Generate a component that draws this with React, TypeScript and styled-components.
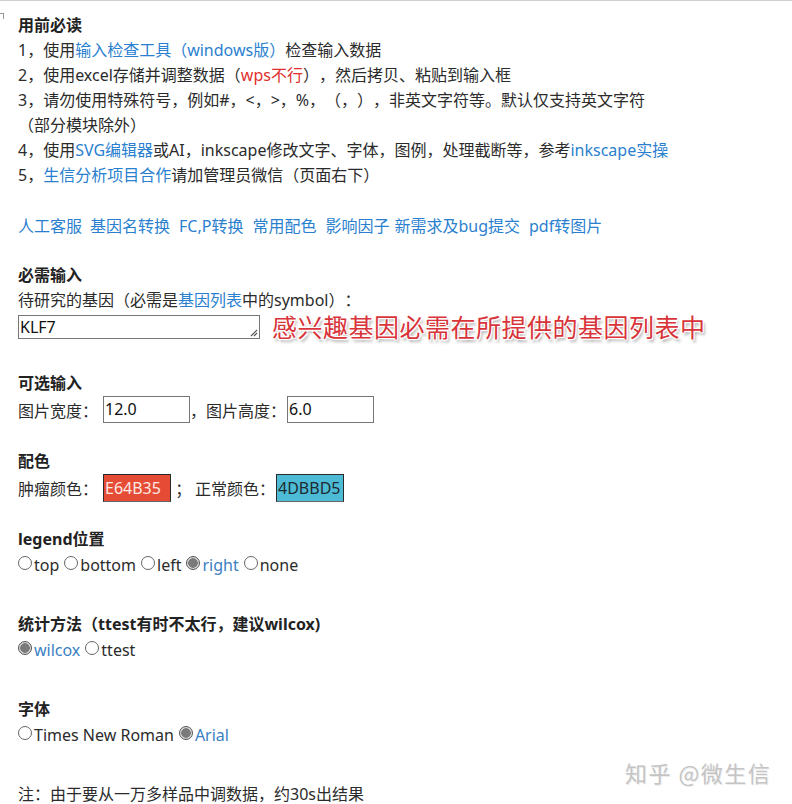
import React from "react";
import styled, { createGlobalStyle } from "styled-components";

const Global = createGlobalStyle`
  html, body { margin: 0; padding: 0; background: #fff; }
  body {
    font-family: "Noto Sans", "Noto Sans CJK SC", sans-serif;
    font-size: 16px;
    color: #2b2b2b;
    text-spacing-trim: space-all;
  }
`;

const Page = styled.div`
  position: relative;
  width: 792px;
  height: 804px;
  box-sizing: border-box;
  border-top: 1px solid #cfcfcf;
  padding: 12px 0 0 18px;
  overflow: hidden;
`;

const Corner = styled.div`
  position: absolute;
  left: 0;
  top: 12px;
  width: 3px;
  height: 5px;
  border-top: 1px solid #999;
  border-right: 1px solid #999;
`;

const Line = styled.div<{ $mt?: number }>`
  line-height: 25px;
  height: 25px;
  white-space: nowrap;
  margin-top: ${(p) => p.$mt ?? 0}px;
`;

const Title = styled(Line)`
  font-weight: 700;
  color: #222;
`;

const Link = styled.span`
  color: #2a7fcf;
`;

const Warn = styled.span`
  color: #e0302e;
`;

const LinkRow = styled.div<{ $mt?: number }>`
  display: flex;
  line-height: 25px;
  margin-top: ${(p) => p.$mt ?? 0}px;
  color: #2a7fcf;
  white-space: nowrap;
`;

const LinkItem = styled.span<{ $gap: number }>`
  margin-right: ${(p) => p.$gap}px;
`;

const FieldRow = styled.div<{ $mt?: number }>`
  display: flex;
  align-items: center;
  height: 27px;
  margin-top: ${(p) => p.$mt ?? 0}px;
  white-space: nowrap;
`;

const GeneArea = styled.div`
  position: relative;
  box-sizing: border-box;
  width: 242px;
  height: 24px;
  border: 1px solid #767676;
  padding: 0 0 0 1px;
  line-height: 22px;
  font-size: 16px;
  color: #111;
`;

const Grip = styled.svg`
  position: absolute;
  right: 1px;
  bottom: 1px;
`;

const Annotation = styled.span`
  margin-left: 12px;
  font-family: "Noto Sans CJK SC", sans-serif;
  font-size: 25px;
  font-weight: 400;
  line-height: 25px;
  color: #d8343a;
  letter-spacing: 0.5px;
  text-shadow: 1px 1px 0 #fff, -1px -1px 0 #fff, 1px -1px 0 #fff, -1px 1px 0 #fff,
    2px 3px 3px rgba(0, 0, 0, 0.35);
`;

const Label = styled.span<{ $w?: number }>`
  display: inline-block;
  width: ${(p) => (p.$w ? `${p.$w}px` : "auto")};
`;

const NumBox = styled.div`
  box-sizing: border-box;
  width: 87px;
  height: 27px;
  border: 1px solid #767676;
  padding-left: 1px;
  line-height: 25px;
  color: #111;
`;

const ColorBox = styled.div<{ $bg: string; $fg: string }>`
  box-sizing: border-box;
  width: 68px;
  height: 28px;
  border: 1px solid #2a2a2a;
  border-bottom-color: #666;
  padding-left: 1px;
  line-height: 26px;
  background: ${(p) => p.$bg};
  color: ${(p) => p.$fg};
`;

const RadioRow = styled.div<{ $mt?: number }>`
  display: flex;
  align-items: center;
  height: 25px;
  margin-top: ${(p) => p.$mt ?? 0}px;
  white-space: nowrap;
`;

const RadioItem = styled.span<{ $on?: boolean }>`
  display: inline-flex;
  align-items: center;
  margin-right: 5px;
  color: ${(p) => (p.$on ? "#3a7fc2" : "#2b2b2b")};
`;

const Dot = styled.span<{ $on?: boolean }>`
  display: inline-block;
  box-sizing: border-box;
  width: 14px;
  height: 14px;
  margin: -4px 2px 0 0;
  border-radius: 50%;
  border: 1px solid ${(p) => (p.$on ? "#555" : "#666")};
  background: ${(p) => (p.$on ? "radial-gradient(circle, #7a7a7a 0 4.5px, #d6d6d6 5px)" : "#fff")};
`;

const Watermark = styled.div`
  position: absolute;
  left: 625px;
  top: 755px;
  font-family: "Noto Sans CJK SC", sans-serif;
  font-size: 22px;
  color: #c4c4c4;
  letter-spacing: 1.5px;
  text-shadow: 1px 1px 0 #eee;
`;

type Opt = { label: string; on?: boolean };

const Radios: React.FC<{ opts: Opt[]; mt?: number }> = ({ opts, mt }) => (
  <RadioRow $mt={mt}>
    {opts.map((o) => (
      <RadioItem key={o.label} $on={o.on}>
        <Dot $on={o.on} />
        {o.label}
      </RadioItem>
    ))}
  </RadioRow>
);

export default function App() {
  return (
    <>
      <Global />
      <Page>
        <Corner />
        <Title>用前必读</Title>
        <Line>
          1，使用<Link>输入检查工具（windows版）</Link>检查输入数据
        </Line>
        <Line>
          2，使用excel存储并调整数据（<Warn>wps不行</Warn>），然后拷贝、粘贴到输入框
        </Line>
        <Line>
          3，请勿使用特殊符号，例如#，&lt;，&gt;，%，（，），非英文字符等。默认仅支持英文字符
        </Line>
        <Line>（部分模块除外）</Line>
        <Line>
          4，使用<Link>SVG编辑器</Link>或AI，inkscape修改文字、字体，图例，处理截断等，参考
          <Link>inkscape实操</Link>
        </Line>
        <Line>
          5，<Link>生信分析项目合作</Link>请加管理员微信（页面右下）
        </Line>

        <LinkRow $mt={26}>
          <LinkItem $gap={8}>人工客服</LinkItem>
          <LinkItem $gap={9}>基因名转换</LinkItem>
          <LinkItem $gap={9}>FC,P转换</LinkItem>
          <LinkItem $gap={9}>常用配色</LinkItem>
          <LinkItem $gap={5}>影响因子</LinkItem>
          <LinkItem $gap={9}>新需求及bug提交</LinkItem>
          <LinkItem $gap={0}>pdf转图片</LinkItem>
        </LinkRow>

        <Title $mt={24}>必需输入</Title>
        <Line>
          待研究的基因（必需是<Link>基因列表</Link>中的symbol）：
        </Line>
        <FieldRow>
          <GeneArea>
            KLF7
            <Grip width="9" height="9" viewBox="0 0 9 9">
              <path d="M8 2 L2 8 M8 5 L5 8" stroke="#555" strokeWidth="1.2" fill="none" />
            </Grip>
          </GeneArea>
          <Annotation>感兴趣基因必需在所提供的基因列表中</Annotation>
        </FieldRow>

        <Title $mt={31}>可选输入</Title>
        <FieldRow>
          <Label $w={85}>图片宽度：</Label>
          <NumBox>12.0</NumBox>
          <Label $w={16}>，</Label>
          <Label $w={81}>图片高度：</Label>
          <NumBox>6.0</NumBox>
        </FieldRow>

        <Title $mt={26}>配色</Title>
        <FieldRow>
          <Label $w={85}>肿瘤颜色：</Label>
          <ColorBox $bg="#E64B35" $fg="#fbe9e4">E64B35</ColorBox>
          <Label $w={24}>&nbsp;；</Label>
          <Label $w={81}>正常颜色：</Label>
          <ColorBox $bg="#4DBBD5" $fg="#1d2a30">4DBBD5</ColorBox>
        </FieldRow>

        <Title $mt={26}>legend位置</Title>
        <Radios
          opts={[
            { label: "top" },
            { label: "bottom" },
            { label: "left" },
            { label: "right", on: true },
            { label: "none" },
          ]}
        />

        <Title $mt={35}>统计方法（ttest有时不太行，建议wilcox)</Title>
        <Radios opts={[{ label: "wilcox", on: true }, { label: "ttest" }]} />

        <Title $mt={35}>字体</Title>
        <Radios opts={[{ label: "Times New Roman" }, { label: "Arial", on: true }]} />

        <Line $mt={35}>注：由于要从一万多样品中调数据，约30s出结果</Line>

        <Watermark>知乎 @微生信</Watermark>
      </Page>
    </>
  );
}
